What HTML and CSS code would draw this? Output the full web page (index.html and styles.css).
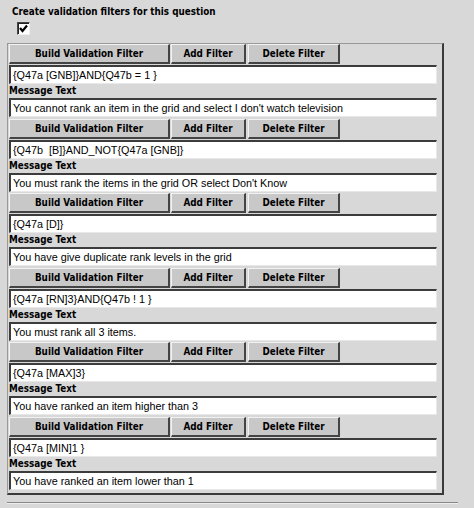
FILE: index.html
```html
<!DOCTYPE html>
<html>
<head>
<meta charset="utf-8">
<link rel="stylesheet" href="styles.css">
</head>
<body>
<div class="page">
  <div class="title">Create validation filters for this question</div>
  <div class="checkrow"><span class="check"><svg width="9" height="9" viewBox="0 0 9 9"><path d="M1 4 L3.5 7 L8 1.5" fill="none" stroke="#000" stroke-width="2.2"/></svg></span></div>
  <div class="panel">
    <div class="block">
      <div class="btns"><button class="btn b1">Build Validation Filter</button><button class="btn b2">Add Filter</button><button class="btn b3">Delete Filter</button></div>
      <div class="field">{Q47a [GNB]}AND{Q47b = 1 }</div>
      <div class="label">Message Text</div>
      <div class="field">You cannot rank an item in the grid and select I don't watch television</div>
    </div>
    <div class="block">
      <div class="btns"><button class="btn b1">Build Validation Filter</button><button class="btn b2">Add Filter</button><button class="btn b3">Delete Filter</button></div>
      <div class="field">{Q47b &nbsp;[B]}AND_NOT{Q47a [GNB]}</div>
      <div class="label">Message Text</div>
      <div class="field">You must rank the items in the grid OR select Don't Know</div>
    </div>
    <div class="block">
      <div class="btns"><button class="btn b1">Build Validation Filter</button><button class="btn b2">Add Filter</button><button class="btn b3">Delete Filter</button></div>
      <div class="field">{Q47a [D]}</div>
      <div class="label">Message Text</div>
      <div class="field">You have give duplicate rank levels in the grid</div>
    </div>
    <div class="block">
      <div class="btns"><button class="btn b1">Build Validation Filter</button><button class="btn b2">Add Filter</button><button class="btn b3">Delete Filter</button></div>
      <div class="field">{Q47a [RN]3}AND{Q47b ! 1 }</div>
      <div class="label">Message Text</div>
      <div class="field">You must rank all 3 items.</div>
    </div>
    <div class="block">
      <div class="btns"><button class="btn b1">Build Validation Filter</button><button class="btn b2">Add Filter</button><button class="btn b3">Delete Filter</button></div>
      <div class="field">{Q47a [MAX]3}</div>
      <div class="label">Message Text</div>
      <div class="field">You have ranked an item higher than 3</div>
    </div>
    <div class="block">
      <div class="btns"><button class="btn b1">Build Validation Filter</button><button class="btn b2">Add Filter</button><button class="btn b3">Delete Filter</button></div>
      <div class="field">{Q47a [MIN]1 }</div>
      <div class="label">Message Text</div>
      <div class="field">You have ranked an item lower than 1</div>
    </div>
  </div>
  <div class="rule"></div>
</div>
</body>
</html>
```

FILE: styles.css
```css
html, body {
  margin: 0;
  padding: 0;
  background: #d8d8d8;
}
.page {
  width: 474px;
  height: 508px;
  padding-top: 6px;
  box-sizing: border-box;
}
.title {
  padding-left: 12px;
  font-family: "DejaVu Sans Condensed", "DejaVu Sans", sans-serif;
  font-weight: bold;
  font-size: 9.8px;
  line-height: 12px;
  color: #000;
}
.checkrow {
  padding-left: 17px;
  padding-top: 4px;
  height: 25px;
  box-sizing: border-box;
}
.check {
  display: block;
  width: 9px;
  height: 9px;
  padding: 1px;
  background: #fff;
  border-top: 1px solid #444;
  border-left: 1px solid #444;
  border-right: 1px solid #f0f0f0;
  border-bottom: 1px solid #f0f0f0;
  box-shadow: inset 1px 1px 0 #222;
}
.check svg { display: block; }
.panel {
  margin-left: 7px;
  width: 437px;
  box-sizing: border-box;
  border-top: 1px solid #999;
  border-left: 1px solid #999;
  border-right: 2px solid #3a3a3a;
  border-bottom: 2px solid #3a3a3a;
  padding: 0 0 1px 1px;
}
.block {
  display: flex;
  flex-direction: column;
  padding-bottom: 1.6px;
}
.btns {
  display: flex;
  gap: 1px;
  height: 20px;
}
.btn {
  margin: 0;
  padding: 0;
  height: 20px;
  background: #c8c8c8;
  border-top: 1px solid #f2f2f2;
  border-left: 1px solid #f2f2f2;
  border-right: 2px solid #444;
  border-bottom: 2px solid #444;
  font-family: "DejaVu Sans Condensed", "DejaVu Sans", sans-serif;
  font-weight: bold;
  font-size: 9.8px;
  color: #000;
  box-sizing: border-box;
}
.b1 { width: 161px; }
.b2 { width: 75px; }
.b3 { width: 92px; margin-left: 1px; }
.field {
  margin-top: 1px;
  width: 428px;
  height: 19px;
  box-sizing: border-box;
  background: #fff;
  border-top: 2px solid #3c3c3c;
  border-left: 2px solid #3c3c3c;
  border-right: 1px solid #e8e8e8;
  border-bottom: 1px solid #e8e8e8;
  padding-left: 2px;
  font-family: "Liberation Sans", Arial, sans-serif;
  font-size: 10.8px;
  line-height: 16px;
  color: #000;
  white-space: nowrap;
  overflow: hidden;
}
.label {
  font-family: "DejaVu Sans Condensed", "DejaVu Sans", sans-serif;
  font-weight: bold;
  font-size: 9.8px;
  line-height: 13px;
  height: 13px;
  color: #000;
}
.rule {
  margin-left: 7px;
  margin-top: 7px;
  width: 451px;
  height: 1px;
  background: #888;
  border-bottom: 1px solid #eee;
}
```
